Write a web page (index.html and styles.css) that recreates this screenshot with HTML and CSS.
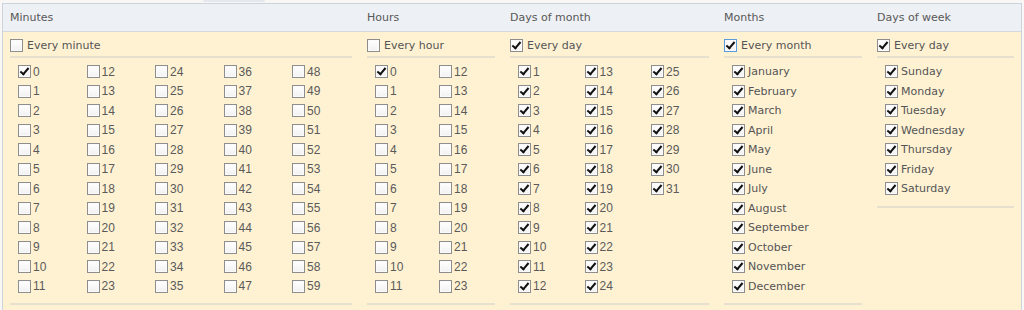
FILE: index.html
```html
<!DOCTYPE html>
<html>
<head>
<meta charset="utf-8">
<link rel="stylesheet" href="styles.css">
</head>
<body>
<div class="topstrip"><div class="tab"></div></div>
<div class="panel">
  <div class="head cols">
    <div>Minutes</div><div>Hours</div><div>Days of month</div><div>Months</div><div>Days of week</div>
  </div>
  <div class="body cols">
    <div class="col">
      <label class="every"><i class="cb"></i>Every minute</label>
      <div class="list g-min num">
        <label><i class="cb on"></i>0</label><label><i class="cb"></i>1</label><label><i class="cb"></i>2</label><label><i class="cb"></i>3</label><label><i class="cb"></i>4</label><label><i class="cb"></i>5</label><label><i class="cb"></i>6</label><label><i class="cb"></i>7</label><label><i class="cb"></i>8</label><label><i class="cb"></i>9</label><label><i class="cb"></i>10</label><label><i class="cb"></i>11</label>
        <label><i class="cb"></i>12</label><label><i class="cb"></i>13</label><label><i class="cb"></i>14</label><label><i class="cb"></i>15</label><label><i class="cb"></i>16</label><label><i class="cb"></i>17</label><label><i class="cb"></i>18</label><label><i class="cb"></i>19</label><label><i class="cb"></i>20</label><label><i class="cb"></i>21</label><label><i class="cb"></i>22</label><label><i class="cb"></i>23</label>
        <label><i class="cb"></i>24</label><label><i class="cb"></i>25</label><label><i class="cb"></i>26</label><label><i class="cb"></i>27</label><label><i class="cb"></i>28</label><label><i class="cb"></i>29</label><label><i class="cb"></i>30</label><label><i class="cb"></i>31</label><label><i class="cb"></i>32</label><label><i class="cb"></i>33</label><label><i class="cb"></i>34</label><label><i class="cb"></i>35</label>
        <label><i class="cb"></i>36</label><label><i class="cb"></i>37</label><label><i class="cb"></i>38</label><label><i class="cb"></i>39</label><label><i class="cb"></i>40</label><label><i class="cb"></i>41</label><label><i class="cb"></i>42</label><label><i class="cb"></i>43</label><label><i class="cb"></i>44</label><label><i class="cb"></i>45</label><label><i class="cb"></i>46</label><label><i class="cb"></i>47</label>
        <label><i class="cb"></i>48</label><label><i class="cb"></i>49</label><label><i class="cb"></i>50</label><label><i class="cb"></i>51</label><label><i class="cb"></i>52</label><label><i class="cb"></i>53</label><label><i class="cb"></i>54</label><label><i class="cb"></i>55</label><label><i class="cb"></i>56</label><label><i class="cb"></i>57</label><label><i class="cb"></i>58</label><label><i class="cb"></i>59</label>
      </div>
    </div>
    <div class="col">
      <label class="every"><i class="cb"></i>Every hour</label>
      <div class="list g-hour num">
        <label><i class="cb on"></i>0</label><label><i class="cb"></i>1</label><label><i class="cb"></i>2</label><label><i class="cb"></i>3</label><label><i class="cb"></i>4</label><label><i class="cb"></i>5</label><label><i class="cb"></i>6</label><label><i class="cb"></i>7</label><label><i class="cb"></i>8</label><label><i class="cb"></i>9</label><label><i class="cb"></i>10</label><label><i class="cb"></i>11</label>
        <label><i class="cb"></i>12</label><label><i class="cb"></i>13</label><label><i class="cb"></i>14</label><label><i class="cb"></i>15</label><label><i class="cb"></i>16</label><label><i class="cb"></i>17</label><label><i class="cb"></i>18</label><label><i class="cb"></i>19</label><label><i class="cb"></i>20</label><label><i class="cb"></i>21</label><label><i class="cb"></i>22</label><label><i class="cb"></i>23</label>
      </div>
    </div>
    <div class="col">
      <label class="every"><i class="cb on"></i>Every day</label>
      <div class="list g-day num">
        <label><i class="cb on"></i>1</label><label><i class="cb on"></i>2</label><label><i class="cb on"></i>3</label><label><i class="cb on"></i>4</label><label><i class="cb on"></i>5</label><label><i class="cb on"></i>6</label><label><i class="cb on"></i>7</label><label><i class="cb on"></i>8</label><label><i class="cb on"></i>9</label><label><i class="cb on"></i>10</label><label><i class="cb on"></i>11</label><label><i class="cb on"></i>12</label>
        <label><i class="cb on"></i>13</label><label><i class="cb on"></i>14</label><label><i class="cb on"></i>15</label><label><i class="cb on"></i>16</label><label><i class="cb on"></i>17</label><label><i class="cb on"></i>18</label><label><i class="cb on"></i>19</label><label><i class="cb on"></i>20</label><label><i class="cb on"></i>21</label><label><i class="cb on"></i>22</label><label><i class="cb on"></i>23</label><label><i class="cb on"></i>24</label>
        <label><i class="cb on"></i>25</label><label><i class="cb on"></i>26</label><label><i class="cb on"></i>27</label><label><i class="cb on"></i>28</label><label><i class="cb on"></i>29</label><label><i class="cb on"></i>30</label><label><i class="cb on"></i>31</label>
      </div>
    </div>
    <div class="col">
      <label class="every"><i class="cb on focus"></i>Every month</label>
      <div class="list g-one">
        <label><i class="cb on"></i>January</label><label><i class="cb on"></i>February</label><label><i class="cb on"></i>March</label><label><i class="cb on"></i>April</label><label><i class="cb on"></i>May</label><label><i class="cb on"></i>June</label><label><i class="cb on"></i>July</label><label><i class="cb on"></i>August</label><label><i class="cb on"></i>September</label><label><i class="cb on"></i>October</label><label><i class="cb on"></i>November</label><label><i class="cb on"></i>December</label>
      </div>
    </div>
    <div class="col">
      <label class="every"><i class="cb on"></i>Every day</label>
      <div class="list g-one">
        <label><i class="cb on"></i>Sunday</label><label><i class="cb on"></i>Monday</label><label><i class="cb on"></i>Tuesday</label><label><i class="cb on"></i>Wednesday</label><label><i class="cb on"></i>Thursday</label><label><i class="cb on"></i>Friday</label><label><i class="cb on"></i>Saturday</label>
      </div>
    </div>
  </div>
</div>
</body>
</html>
```
FILE: styles.css
```css
html, body {
  margin: 0;
  padding: 0;
  background: #f8f7f5;
  font-family: "DejaVu Sans", Verdana, sans-serif;
  font-size: 11px;
  color: #555;
}
.topstrip {
  height: 3px;
  overflow: hidden;
}
.tab {
  margin-left: 203px;
  width: 62px;
  height: 2px;
  background: #e4e8ee;
  border-radius: 0 0 3px 3px;
}
.panel {
  margin-left: 2px;
  width: 1018px;
  border: 1px solid #cdd3da;
  border-bottom: none;
  background: #fff2d3;
  height: 320px;
}
.cols {
  display: grid;
  grid-template-columns: 342px 128px 199px 138px 137px;
  column-gap: 15px;
  padding-left: 7px;
}
.head {
  height: 27px;
  align-items: center;
  background: #edf0f4;
  border-bottom: 1px solid #d3d9e0;
  color: #585858;
}
.body {
  padding-top: 3px;
  align-items: start;
}
.col label {
  display: flex;
  align-items: center;
  white-space: nowrap;
}
.every {
  height: 20px;
  gap: 4px;
}
.list {
  margin-top: 1px;
  border-top: 2px solid #e8e0ce;
  border-bottom: 2px solid #e8e0ce;
  padding: 4px 0 7px 8px;
  display: grid;
  grid-auto-flow: column;
  grid-template-rows: repeat(12, 19.5px);
}
.list label {
  gap: 2px;
}
.num {
  font-family: "Liberation Sans", Arial, sans-serif;
  font-size: 12px;
  color: #5a5a5a;
}
.g-min { grid-template-columns: repeat(5, 68.5px); }
.g-hour { grid-template-columns: repeat(2, 64px); }
.g-day { grid-template-columns: repeat(3, 66.5px); }
.g-one { grid-template-rows: none; grid-auto-flow: row; grid-auto-rows: 19.5px; }
.g-one label { gap: 3px; }
.cb {
  position: relative;
  display: inline-block;
  flex: none;
  width: 11px;
  height: 11px;
  border: 1px solid #8e8e8e;
  background: linear-gradient(#ffffff, #f1f1f1);
  box-shadow: inset 0 0 0 1px #fafafa;
}
.cb.focus {
  border-color: #5a9bdc;
}
.cb.on::after {
  content: "";
  position: absolute;
  left: 3px;
  top: 0px;
  width: 3px;
  height: 7px;
  border-right: 2px solid #111;
  border-bottom: 2px solid #111;
  transform: rotate(40deg);
}
```
